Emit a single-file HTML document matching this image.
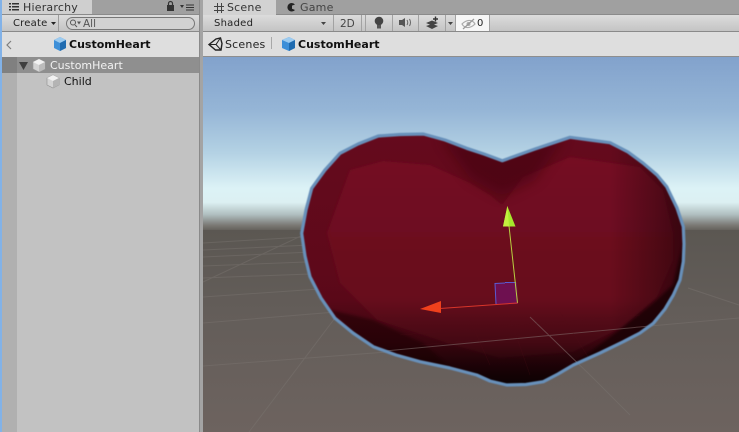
<!DOCTYPE html>
<html><head><meta charset="utf-8"><style>
html,body{margin:0;padding:0;width:739px;height:432px;overflow:hidden;background:#a0a0a0}
body{position:relative;font-family:"DejaVu Sans","Liberation Sans",sans-serif;font-size:11px;color:#1c1c1c}
.a{position:absolute}
.t{position:absolute;white-space:nowrap;line-height:14px}
svg{position:absolute;overflow:visible}
</style></head><body>
<!-- left panel -->
<div class="a" style="left:0;top:0;width:199px;height:14px;background:#a0a0a0"></div>
<div class="a" style="left:0;top:0;width:92px;height:14px;background:#cfcfcf"></div>
<div class="a" style="left:0;top:14px;width:199px;height:18px;background:linear-gradient(#dcdcdc,#c4c4c4);border-top:1px solid #8a8a8a;border-bottom:1px solid #8a8a8a;box-sizing:border-box"></div>
<div class="a" style="left:0;top:32px;width:199px;height:25px;background:#dedede"></div>
<div class="a" style="left:0;top:57px;width:199px;height:375px;background:#c2c2c2"></div>
<div class="a" style="left:0;top:57px;width:17px;height:375px;background:#b0b0b0"></div>
<div class="a" style="left:0;top:57px;width:199px;height:16px;background:#8f8f8f"></div>
<div class="a" style="left:0;top:57px;width:17px;height:16px;background:#808080"></div>
<div class="a" style="left:0;top:0;width:2px;height:432px;background:#82b2e8"></div>
<div class="a" style="left:199px;top:0;width:4px;height:432px;background:#a4a4a4;border-left:1px solid #8a8a8a;box-sizing:border-box"></div>

<svg style="left:0;top:0" width="200" height="100">
<g fill="#333"><rect x="9" y="3" width="2" height="1.5"/><rect x="9" y="6" width="2" height="1.5"/><rect x="9" y="9" width="2" height="1.5"/><rect x="12" y="3" width="7" height="1.5"/><rect x="12" y="6" width="7" height="1.5"/><rect x="12" y="9" width="7" height="1.5"/></g>
<rect x="167" y="5" width="7" height="6" fill="#333"/><path d="M168.500 5V3.500a2 2 0 0 1 4 0V5" fill="none" stroke="#333" stroke-width="1.200"/>
<path d="M180 5h4l-2 3z" fill="#333"/><path d="M186 5h8M186 7.500h8M186 10h8" stroke="#333" stroke-width="1.100"/>
<rect x="58" y="15" width="1" height="16" fill="#9c9c9c"/>
<path d="M51 22h5l-2.500 3z" fill="#222"/>
<rect x="66.500" y="17.500" width="128" height="12" rx="6" fill="#d2d2d2" stroke="#777"/>
<circle cx="73" cy="22.500" r="2.500" fill="none" stroke="#555"/><path d="M75 25l2 2" stroke="#555"/><path d="M77 21.500h4l-2 3z" fill="#555"/>
<path d="M11 41l-4 4 4 4" fill="none" stroke="#7e7e7e" stroke-width="1.200"/>
<path d="M54 40l6-3 6 3v8l-6 3-6-3z" fill="#3d8fd8"/><path d="M54 40l6-3 6 3-6 3z" fill="#9ccbf0"/><path d="M60 43v8l6-3v-8z" fill="#1f6bb0"/>
<path d="M19 62h9l-4.500 8z" fill="#3e3e3e"/>
<path d="M33 62l6-3 6 3v7l-6 3-6-3z" fill="#d4d4d4" stroke="#9a9a9a" stroke-width=".6"/><path d="M33 62l6-3 6 3-6 3z" fill="#f2f2f2"/><path d="M39 65v7l6-3v-7z" fill="#bcbcbc"/>
<path d="M47 78l6-3 6 3v7l-6 3-6-3z" fill="#d4d4d4" stroke="#8e8e8e" stroke-width=".6"/><path d="M47 78l6-3 6 3-6 3z" fill="#f2f2f2"/><path d="M53 81v7l6-3v-7z" fill="#b4b4b4"/>
</svg>
<div class="t" style="left:23px;top:1px;color:#333;letter-spacing:.2px">Hierarchy</div>
<div class="t" style="left:13px;top:17px;font-size:10px;color:#222;letter-spacing:.2px">Create</div>
<div class="t" style="left:83px;top:17px;font-size:10.500px;color:#555">All</div>
<div class="t" style="left:69px;top:38px;font-weight:bold;font-size:11px;color:#111">CustomHeart</div>
<div class="t" style="left:50px;top:59px;color:#f2f2f2">CustomHeart</div>
<div class="t" style="left:64px;top:75px;color:#111">Child</div>

<!-- right top -->
<div class="a" style="left:203px;top:0;width:536px;height:14px;background:#a0a0a0"></div>
<div class="a" style="left:203px;top:14px;width:536px;height:18px;background:linear-gradient(#dcdcdc,#c4c4c4);border-top:1px solid #8a8a8a;border-bottom:1px solid #8a8a8a;box-sizing:border-box"></div>
<div class="a" style="left:203px;top:0;width:73px;height:15px;background:#d2d2d2"></div>
<div class="a" style="left:203px;top:32px;width:536px;height:24px;background:#dedede"></div>
<div class="a" style="left:203px;top:56px;width:536px;height:1px;background:#8e8e8e"></div>
<div class="a" style="left:456px;top:15px;width:33px;height:16px;background:#f6f6f6"></div>

<!-- scene -->
<svg style="left:0;top:0" width="739" height="432">
<defs>
<linearGradient id="sky" x1="0" y1="57" x2="0" y2="232" gradientUnits="userSpaceOnUse">
<stop offset="0" stop-color="#82a2cc"/><stop offset=".3" stop-color="#95b5d6"/><stop offset=".55" stop-color="#b4d2e4"/><stop offset=".75" stop-color="#dcf2f6"/><stop offset=".83" stop-color="#dcf0f2"/><stop offset=".9" stop-color="#b0bfc0"/><stop offset=".96" stop-color="#7c7a76"/><stop offset="1" stop-color="#5c5853"/>
</linearGradient>
<linearGradient id="gnd" x1="0" y1="230" x2="0" y2="432" gradientUnits="userSpaceOnUse">
<stop offset="0" stop-color="#5b5752"/><stop offset=".4" stop-color="#635d59"/><stop offset="1" stop-color="#6d635f"/>
</linearGradient>
<linearGradient id="base" x1="0" y1="135" x2="0" y2="385" gradientUnits="userSpaceOnUse">
<stop offset="0" stop-color="#650a1d"/><stop offset=".55" stop-color="#5e091a"/><stop offset="1" stop-color="#4a0612"/>
</linearGradient>
<linearGradient id="mid" x1="0" y1="160" x2="0" y2="330" gradientUnits="userSpaceOnUse">
<stop offset="0" stop-color="#740a23"/><stop offset=".5" stop-color="#6c091f"/><stop offset="1" stop-color="#63081c"/>
</linearGradient>
<linearGradient id="bdark" x1="0" y1="300" x2="0" y2="385" gradientUnits="userSpaceOnUse">
<stop offset="0" stop-color="#0a0102" stop-opacity="0"/><stop offset=".5" stop-color="#0a0102" stop-opacity=".35"/><stop offset=".85" stop-color="#0a0102" stop-opacity=".82"/><stop offset="1" stop-color="#0a0102" stop-opacity=".97"/>
</linearGradient>
<linearGradient id="rdark" x1="610" y1="0" x2="685" y2="0" gradientUnits="userSpaceOnUse">
<stop offset="0" stop-color="#100103" stop-opacity="0"/><stop offset="1" stop-color="#100103" stop-opacity=".5"/>
</linearGradient>
<filter id="b1" x="-10%" y="-10%" width="120%" height="120%"><feGaussianBlur stdDeviation="1.2"/></filter>
<filter id="b5" x="-30%" y="-30%" width="160%" height="160%"><feGaussianBlur stdDeviation="6"/></filter>
<filter id="b0" x="-5%" y="-5%" width="110%" height="110%"><feGaussianBlur stdDeviation=".45"/></filter>
<clipPath id="hc"><polygon points="502.300,160.700 484,154 466.700,148.300 445,140 423.300,134 400,134.500 378.300,136 358,144 340,153.300 325,170 311.700,188.300 306,210 301.700,233.300 305,256 310,276.700 321,298 335,318.300 353,333 373.300,346.700 396,355 420,361.700 450,368 476.700,375 490,381 506.700,385 526,384.500 543.300,381.700 558,374 573.300,365 600,353 623.300,341.700 640,333 653.300,323.300 665,309 673.300,295 680,280 683.300,261.700 684,244 683.300,226.700 677,208 666.700,186.700 657,175 643.300,163.300 628,152 610,142.700 590,140 570,137.300 535,149"/></clipPath>
</defs>
<rect x="203" y="57" width="536" height="175" fill="url(#sky)"/>
<rect x="203" y="230" width="536" height="202" fill="url(#gnd)"/>
<g stroke="#7d7773" stroke-width="1" fill="none" opacity=".42">
<path d="M203 243L320 236M203 250L310 245M203 257L312 252M203 266L306 262M203 278L310 274M203 297L334 288M203 323L360 310M203 366L400 351L650 326L739 318"/>
<path d="M203 282L318 228M249 432L335 318M530 317L590 375L630 415M688 288L739 305"/>
</g>
<g clip-path="url(#hc)">
<rect x="295" y="130" width="395" height="260" fill="url(#base)"/>
<polygon points="350,170 383,161 430,165 470,183 490,195 502,205 523,177 570,157 640,167 663,190 673,233 673,260 657,297 623,327 573,352 500,358 453,345 423,335 377,320 340,283 327,233" fill="url(#mid)" filter="url(#b1)"/>
<polygon points="440,136 502,152 565,136 535,180 502,196 470,178" fill="#3c0410" opacity=".5" filter="url(#b5)"/>
<rect x="610" y="130" width="80" height="260" fill="url(#rdark)"/>
<rect x="295" y="300" width="395" height="90" fill="url(#bdark)"/>
<polygon points="330,310 373,320 423,343 453,370 420,368 370,350" fill="#140104" opacity=".45" filter="url(#b1)"/>
<polygon points="684,240 673,285 653,303 623,327 573,365 620,350 660,325 684,280" fill="#100103" opacity=".6" filter="url(#b1)"/>
<path d="M385 351L650 326M530 317L590 375" stroke="#8a7a78" stroke-width="1" opacity=".5" fill="none"/>
<g stroke="#52121c" stroke-width=".6" opacity=".3" fill="none"><path d="M400 335L640 315M420 345L660 325M470 320L490 365M510 318L530 375M560 312L590 360"/></g>
</g>
<polygon points="502.300,160.700 484,154 466.700,148.300 445,140 423.300,134 400,134.500 378.300,136 358,144 340,153.300 325,170 311.700,188.300 306,210 301.700,233.300 305,256 310,276.700 321,298 335,318.300 353,333 373.300,346.700 396,355 420,361.700 450,368 476.700,375 490,381 506.700,385 526,384.500 543.300,381.700 558,374 573.300,365 600,353 623.300,341.700 640,333 653.300,323.300 665,309 673.300,295 680,280 683.300,261.700 684,244 683.300,226.700 677,208 666.700,186.700 657,175 643.300,163.300 628,152 610,142.700 590,140 570,137.300 535,149" fill="none" stroke="#6790ba" stroke-width="3.200" stroke-linejoin="round" filter="url(#b0)"/>
<!-- gizmo -->
<polygon points="494.500,283.500 517,282.500 518,304 496,304.500" fill="#6e1050"/>
<path d="M496 304L495 283.500L505 283" fill="none" stroke="#5a5ad0" stroke-width="1"/>
<path d="M505 282.500L516 282.500" stroke="#5a5ad0" stroke-width="1"/>
<line x1="509" y1="226" x2="517.500" y2="303" stroke="#b8d040" stroke-width="1"/>
<line x1="517.500" y1="303" x2="440" y2="308.500" stroke="#d8352a" stroke-width="1"/>
<polygon points="507.300,206 503,226.500 515.500,226.500" fill="#a6e82c"/><polygon points="507.500,206 503,226.500 509,226.500" fill="#c4f040"/>
<polygon points="420,309 441,301 441,313" fill="#f0401c"/>
</svg>

<svg style="left:0;top:0" width="739" height="60">
<g stroke="#444" stroke-width="1"><path d="M217.500 3v10M221.500 3v10M214 6.500h10M214 10.500h10"/></g>
<path d="M295 4.500a4.300 4.300 0 1 0 0 5.500l-3-1.200v-3.200z" fill="#222"/>
<rect x="333" y="15" width="1" height="16" fill="#a2a2a2"/><rect x="361" y="15" width="1" height="16" fill="#a2a2a2"/><rect x="365" y="15" width="1" height="16" fill="#a2a2a2"/><rect x="392" y="15" width="1" height="16" fill="#a2a2a2"/><rect x="418" y="15" width="1" height="16" fill="#a2a2a2"/><rect x="445" y="15" width="1" height="16" fill="#a2a2a2"/><rect x="455" y="15" width="1" height="16" fill="#a2a2a2"/><rect x="489" y="15" width="1" height="16" fill="#a2a2a2"/>
<path d="M321 22h5l-2.500 3z" fill="#444"/>
<circle cx="379" cy="21" r="4.300" fill="#444"/><rect x="377" y="25" width="4" height="3.500" fill="#555"/>
<path d="M399 20h3l3-2v9l-3-2h-3z" fill="#555"/><path d="M407 20q1.500 2.500 0 5M409.500 19q2 3.500 0 7" stroke="#666" fill="none"/>
<path d="M426 23l6-2.500 6 2.500-6 2.500zM426 26l6-2 6 2-6 3z" fill="#444"/><path d="M433 19h5M435.500 16.500v5" stroke="#333" stroke-width="1.400"/>
<path d="M448 22h5l-2.500 3z" fill="#444"/>
<path d="M462 24q5-5 10-3q2 1 3 3q-5 5-10 3q-2-1-3-3z" fill="none" stroke="#aaa" stroke-width="1.200"/><circle cx="468.500" cy="24" r="2" fill="#aaa"/><path d="M463 29l11-10" stroke="#999" stroke-width="1.200"/>
<path d="M209 44.500L216 39L220.500 38L222 43.500L221 50L215.500 50z" fill="none" stroke="#222" stroke-width="1.400"/><path d="M209 44.500h7l4-6M216 44.500l5 5.500" stroke="#222" fill="none"/>
<rect x="271" y="37" width="1" height="12" fill="#a8a8a8"/>
<path d="M282 40l7-3 6 3v8l-6 3-7-3z" fill="#3d8fd8"/><path d="M282 40l7-3 6 3-6 3z" fill="#9ccbf0"/><path d="M289 43v8l6-3v-8z" fill="#1f6bb0"/>
</svg>
<div class="t" style="left:227px;top:1px;color:#333;letter-spacing:.2px">Scene</div>
<div class="t" style="left:300px;top:1px;color:#444;letter-spacing:.2px">Game</div>
<div class="t" style="left:214px;top:17px;font-size:10px;color:#222;letter-spacing:.25px">Shaded</div>
<div class="t" style="left:340px;top:17px;font-size:10.500px;color:#444">2D</div>
<div class="t" style="left:477px;top:17px;font-size:10px;color:#222">0</div>
<div class="t" style="left:225px;top:38px;color:#222;letter-spacing:.2px">Scenes</div>
<div class="t" style="left:298px;top:38px;font-weight:bold;color:#111">CustomHeart</div>
</body></html>
